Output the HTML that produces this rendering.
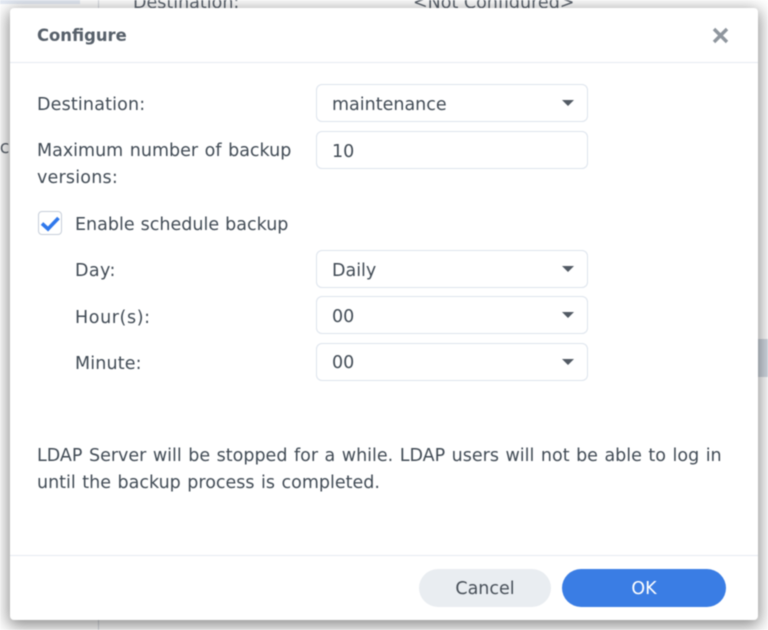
<!DOCTYPE html>
<html>
<head>
<meta charset="utf-8">
<style>
html,body{margin:0;padding:0;width:768px;height:630px;overflow:hidden;background:#fff;}
body{position:relative;font-family:"DejaVu Sans","Liberation Sans",sans-serif;color:#414b55;}
#wrap{position:absolute;left:0;top:0;width:768px;height:630px;overflow:hidden;filter:blur(.5px);}
.bg{position:absolute;white-space:nowrap;color:#5a626c;font-size:17.5px;}
#dlg{position:absolute;left:10px;top:8px;width:748px;height:612px;background:#fff;border-radius:4px;box-shadow:0 4px 16px 2px rgba(0,0,0,.45);}
.t{position:absolute;white-space:nowrap;font-size:17.5px;line-height:24px;color:#414b55;}
.hr{position:absolute;left:10px;width:748px;height:1px;background:#e6ebf1;}
.f{position:absolute;left:316px;width:270px;height:36px;border:1.5px solid #dde4ed;border-radius:6px;background:#fff;}
.f .v{position:absolute;left:15px;top:8px;font-size:17.5px;line-height:24px;color:#414b55;white-space:nowrap;}
.f .a{position:absolute;right:13px;top:15px;width:0;height:0;border-left:6px solid transparent;border-right:6px solid transparent;border-top:6px solid #525a64;}
.btn{position:absolute;top:569px;height:38px;border-radius:19px;text-align:center;line-height:40px;font-size:17.5px;}
</style>
</head>
<body>
<div id="wrap">
  <div style="position:absolute;left:0;top:0;width:80px;height:4px;background:#e4eaf4;"></div>
  <div style="position:absolute;left:98px;top:0;width:1px;height:630px;background:#d5d9e0;"></div>
  <div style="position:absolute;left:758px;top:339px;width:10px;height:38px;background:#d2d9e2;"></div>
  <div class="bg" style="left:133px;top:-9px;line-height:24px;">Destination:</div>
  <div class="bg" style="left:413px;top:-9px;line-height:24px;">&lt;Not Configured&gt;</div>
  <div class="bg" style="left:-11px;top:136px;line-height:24px;">ec</div>

  <div id="dlg"></div>

  <div class="t" style="left:37px;top:24px;font-weight:700;font-size:16.4px;color:#57606a;">Configure</div>
  <svg style="position:absolute;left:712px;top:27px;" width="17" height="17" viewBox="0 0 17 17"><path d="M2 2L15 15M15 2L2 15" stroke="#8f969e" stroke-width="3.400" fill="none"/></svg>
  <div class="hr" style="top:62px;"></div>

  <div class="t" style="left:37px;top:93px;letter-spacing:.17px;">Destination:</div>
  <div class="f" style="top:84px;"><span class="v">maintenance</span><span class="a"></span></div>

  <div class="t" style="left:37px;top:139px;word-spacing:1px;">Maximum number of backup</div>
  <div class="t" style="left:37px;top:166px;letter-spacing:.2px;">versions:</div>
  <div class="f" style="top:131px;"><span class="v">10</span></div>

  <div style="position:absolute;left:38px;top:211px;width:24px;height:24px;border:1.5px solid #c6ced9;border-radius:4px;background:#fff;box-sizing:border-box;"></div>
  <svg style="position:absolute;left:38px;top:211px;" width="24" height="24" viewBox="0 0 24 24"><path d="M4 12.500L10 18L20.500 7" stroke="#2f78ec" stroke-width="3.600" fill="none"/></svg>
  <div class="t" style="left:75px;top:213px;word-spacing:.5px;">Enable schedule backup</div>

  <div class="t" style="left:75px;top:259px;letter-spacing:.4px;">Day:</div>
  <div class="f" style="top:250px;"><span class="v">Daily</span><span class="a"></span></div>

  <div class="t" style="left:75px;top:306px;letter-spacing:.6px;">Hour(s):</div>
  <div class="f" style="top:296px;"><span class="v">00</span><span class="a"></span></div>

  <div class="t" style="left:75px;top:352px;letter-spacing:.15px;">Minute:</div>
  <div class="f" style="top:343px;"><span class="v" style="top:7px;">00</span><span class="a"></span></div>

  <div class="t" style="left:37px;top:444px;word-spacing:.95px;">LDAP Server will be stopped for a while. LDAP users will not be able to log in</div>
  <div class="t" style="left:37px;top:471px;word-spacing:.95px;">until the backup process is completed.</div>

  <div class="hr" style="top:555px;"></div>
  <div class="btn" style="left:419px;width:132px;background:#e9edf1;color:#474f58;">Cancel</div>
  <div class="btn" style="left:562px;width:164px;background:#3a7de4;color:#fff;">OK</div>
</div>
</body>
</html>
